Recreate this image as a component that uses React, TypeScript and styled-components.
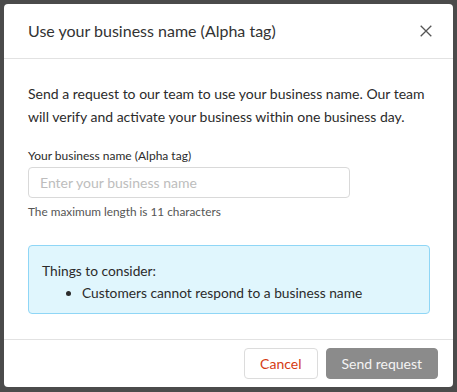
import React from "react";
import styled, { createGlobalStyle } from "styled-components";

const GlobalStyle = createGlobalStyle`
  html, body {
    margin: 0;
    padding: 0;
    background: #4b4b4b;
  }
  body {
    font-family: Lato, "Liberation Sans", sans-serif;
    color: #2b2b2b;
  }
  * { box-sizing: border-box; }
`;

const Backdrop = styled.div`
  width: 457px;
  height: 392px;
  padding: 4px;
`;

const Modal = styled.div`
  width: 449px;
  height: 383px;
  background: #fff;
  border-radius: 4px;
  display: flex;
  flex-direction: column;
`;

const Header = styled.div`
  height: 55px;
  flex-shrink: 0;
  padding: 0 21px 1px 24px;
  display: flex;
  align-items: center;
  justify-content: space-between;
  border-bottom: 1px solid #e2e2e2;
`;

const Title = styled.h2`
  margin: 0;
  font-size: 16px;
  font-weight: 400;
  color: #333;
`;

const CloseButton = styled.button`
  border: 0;
  background: none;
  padding: 0;
  width: 12px;
  height: 12px;
  display: flex;
  cursor: pointer;
`;

const Body = styled.div`
  flex: 1;
  padding: 23px 24px 0;
`;

const Intro = styled.p`
  margin: 0;
  font-size: 14px;
  line-height: 23px;
  color: #2b2b2b;
`;

const Label = styled.label`
  display: block;
  margin-top: 19px;
  font-size: 12px;
  line-height: 18px;
  color: #2b2b2b;
`;

const Input = styled.input`
  display: block;
  margin-top: 2px;
  width: 322px;
  height: 31px;
  border: 1px solid #d9d9d9;
  border-radius: 4px;
  padding: 0 11px;
  font-family: inherit;
  font-size: 14px;
  color: #333;
  &::placeholder {
    color: #bdbdbd;
  }
`;

const Helper = styled.div`
  margin-top: 5px;
  font-size: 11.8px;
  line-height: 17px;
  color: #555;
`;

const InfoBox = styled.div`
  margin-top: 25px;
  width: 402px;
  height: 69px;
  background: #e0f6fd;
  border: 1px solid #8fd6f6;
  border-radius: 4px;
  padding: 14px 13px;
  font-size: 13.75px;
  line-height: 22px;
  color: #2b2b2b;
`;

const List = styled.ul`
  margin: 0;
  padding-left: 40px;
`;

const Footer = styled.div`
  height: 48px;
  flex-shrink: 0;
  border-top: 1px solid #e2e2e2;
  display: flex;
  align-items: flex-start;
  justify-content: flex-end;
  gap: 8px;
  padding: 8px 15px 0;
`;

const Button = styled.button<{ $primary?: boolean }>`
  height: 31px;
  border-radius: 4px;
  font-family: inherit;
  font-size: 14px;
  padding: 0 15px;
  cursor: pointer;
  border: 1px solid ${(p) => (p.$primary ? "#8b8b8b" : "#dcdcdc")};
  background: ${(p) => (p.$primary ? "#8b8b8b" : "#fff")};
  color: ${(p) => (p.$primary ? "#f4f4f4" : "#d53a12")};
`;

export default function App() {
  return (
    <>
      <GlobalStyle />
      <Backdrop>
        <Modal>
          <Header>
            <Title>Use your business name (Alpha tag)</Title>
            <CloseButton aria-label="Close">
              <svg width="12" height="12" viewBox="0 0 12 12">
                <path d="M0.7 0.7 L11.3 11.3 M11.3 0.7 L0.7 11.3" stroke="#555" strokeWidth="1.3" />
              </svg>
            </CloseButton>
          </Header>
          <Body>
            <Intro>
              Send a request to our team to use your business name. Our team will verify and activate your business within one business day.
            </Intro>
            <Label>Your business name (Alpha tag)</Label>
            <Input placeholder="Enter your business name" />
            <Helper>The maximum length is 11 characters</Helper>
            <InfoBox>
              Things to consider:
              <List>
                <li>Customers cannot respond to a business name</li>
              </List>
            </InfoBox>
          </Body>
          <Footer>
            <Button>Cancel</Button>
            <Button $primary>Send request</Button>
          </Footer>
        </Modal>
      </Backdrop>
    </>
  );
}
